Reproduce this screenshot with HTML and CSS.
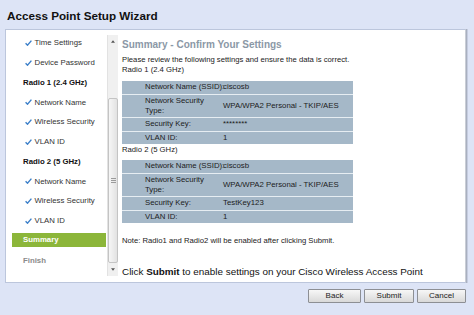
FILE: index.html
```html
<!DOCTYPE html>
<html>
<head>
<meta charset="utf-8">
<link rel="stylesheet" href="styles.css">
</head>
<body>
<div class="title">Access Point Setup Wizard</div>
<div class="panel">
  <div class="sidebar">
    <div class="item done"><svg class="chk" viewBox="0 0 7 6"><path d="M0.6 3.3 L2.5 5.2 L6.4 0.6" fill="none" stroke="#3b7fc9" stroke-width="1.4"/></svg>Time Settings</div>
    <div class="item done"><svg class="chk" viewBox="0 0 7 6"><path d="M0.6 3.3 L2.5 5.2 L6.4 0.6" fill="none" stroke="#3b7fc9" stroke-width="1.4"/></svg>Device Password</div>
    <div class="item group">Radio 1 (2.4 GHz)</div>
    <div class="item done"><svg class="chk" viewBox="0 0 7 6"><path d="M0.6 3.3 L2.5 5.2 L6.4 0.6" fill="none" stroke="#3b7fc9" stroke-width="1.4"/></svg>Network Name</div>
    <div class="item done"><svg class="chk" viewBox="0 0 7 6"><path d="M0.6 3.3 L2.5 5.2 L6.4 0.6" fill="none" stroke="#3b7fc9" stroke-width="1.4"/></svg>Wireless Security</div>
    <div class="item done"><svg class="chk" viewBox="0 0 7 6"><path d="M0.6 3.3 L2.5 5.2 L6.4 0.6" fill="none" stroke="#3b7fc9" stroke-width="1.4"/></svg>VLAN ID</div>
    <div class="item group">Radio 2 (5 GHz)</div>
    <div class="item done"><svg class="chk" viewBox="0 0 7 6"><path d="M0.6 3.3 L2.5 5.2 L6.4 0.6" fill="none" stroke="#3b7fc9" stroke-width="1.4"/></svg>Network Name</div>
    <div class="item done"><svg class="chk" viewBox="0 0 7 6"><path d="M0.6 3.3 L2.5 5.2 L6.4 0.6" fill="none" stroke="#3b7fc9" stroke-width="1.4"/></svg>Wireless Security</div>
    <div class="item done"><svg class="chk" viewBox="0 0 7 6"><path d="M0.6 3.3 L2.5 5.2 L6.4 0.6" fill="none" stroke="#3b7fc9" stroke-width="1.4"/></svg>VLAN ID</div>
    <div class="item current"><span class="bar">Summary</span></div>
    <div class="item todo">Finish</div>
  </div>
  <div class="scroll">
    <div class="arrow"><svg viewBox="0 0 5 3" class="tri"><path d="M0 3 L2.5 0 L5 3 Z" fill="#555"/></svg></div>
    <div class="thumb"><span class="grip"></span><span class="grip"></span><span class="grip"></span></div>
    <div class="arrow down"><svg viewBox="0 0 5 3" class="tri"><path d="M0 0 L2.5 3 L5 0 Z" fill="#555"/></svg></div>
  </div>
  <div class="content">
    <div class="heading">Summary - Confirm Your Settings</div>
    <div class="text intro">Please review the following settings and ensure the data is correct.</div>
    <div class="text">Radio 1 (2.4 GHz)</div>
    <table class="sum first">
      <tr><td class="lbl nw">Network Name (SSID):</td><td class="val">ciscosb</td></tr>
      <tr><td class="lbl">Network Security Type:</td><td class="val">WPA/WPA2 Personal - TKIP/AES</td></tr>
      <tr><td class="lbl">Security Key:</td><td class="val">********</td></tr>
      <tr><td class="lbl">VLAN ID:</td><td class="val">1</td></tr>
    </table>
    <div class="text r2">Radio 2 (5 GHz)</div>
    <table class="sum second">
      <tr><td class="lbl nw">Network Name (SSID):</td><td class="val">ciscosb</td></tr>
      <tr><td class="lbl">Network Security Type:</td><td class="val">WPA/WPA2 Personal - TKIP/AES</td></tr>
      <tr><td class="lbl">Security Key:</td><td class="val">TestKey123</td></tr>
      <tr><td class="lbl">VLAN ID:</td><td class="val">1</td></tr>
    </table>
    <div class="text note">Note: Radio1 and Radio2 will be enabled after clicking Submit.</div>
    <div class="submit-line">Click <b>Submit</b> to enable settings on your Cisco Wireless Access Point</div>
  </div>
</div>
<div class="buttons">
  <button class="btn back">Back</button>
  <button class="btn sub">Submit</button>
  <button class="btn cancel">Cancel</button>
</div>
</body>
</html>
```
FILE: styles.css
```css
html, body {
  margin: 0;
  padding: 0;
}
body {
  width: 474px;
  height: 315px;
  background: #dde4f6;
  font-family: "Liberation Sans", Arial, sans-serif;
  color: #222;
  overflow: hidden;
}
.title {
  box-sizing: border-box;
  height: 29px;
  padding: 9px 0 0 7px;
  font-size: 11.7px;
  line-height: 13px;
  font-weight: bold;
  color: #111;
}
.panel {
  box-sizing: border-box;
  margin-left: 5px;
  width: 461px;
  height: 254px;
  background: #fff;
  border: 1px solid #bcc6dc;
  border-right-color: #c9cdd6;
  box-shadow: 1px 0 0 #a9b0bf, 2px 0 0 #c6cde0;
  display: flex;
}
.sidebar {
  width: 101px;
  padding-top: 3px;
  flex: none;
}
.item {
  height: 19.75px;
  display: flex;
  align-items: center;
  font-size: 7.8px;
  color: #333;
  white-space: nowrap;
}
.item.done {
  padding-left: 19px;
}
.chk {
  width: 7px;
  height: 6px;
  margin-right: 2.5px;
  flex: none;
}
.item.group {
  padding-left: 17px;
  font-weight: bold;
  color: #111;
}
.item.current {
  padding-left: 6px;
}
.bar {
  box-sizing: border-box;
  width: 94px;
  height: 14px;
  line-height: 14px;
  padding-left: 11px;
  background: #8cb63a;
  color: #fff;
  font-weight: bold;
}
.item.todo {
  padding-left: 17px;
  color: #8a8a8a;
  font-weight: bold;
}
.scroll {
  box-sizing: border-box;
  width: 11px;
  flex: none;
  margin: 5px 0 6px 0;
  background: #f0f0f0;
  border-left: 1px solid #e2e2e2;
  display: flex;
  flex-direction: column;
  align-items: center;
}
.arrow {
  height: 13px;
  width: 100%;
  display: flex;
  align-items: center;
  justify-content: center;
  flex: none;
}
.arrow.down {
  margin-top: auto;
}
.tri {
  width: 4px;
  height: 3px;
}
.thumb {
  box-sizing: border-box;
  margin-top: 50px;
  width: 10px;
  height: 165px;
  border: 1px solid #c4c4c4;
  border-radius: 2px;
  background: linear-gradient(to right, #f6f6f6, #e2e2e2);
  display: flex;
  flex-direction: column;
  align-items: center;
  justify-content: center;
  gap: 1px;
}
.grip {
  display: block;
  width: 5px;
  height: 1px;
  background: #9a9a9a;
}
.content {
  padding-left: 4px;
  flex: 1;
}
.heading {
  margin-top: 9px;
  font-size: 10px;
  line-height: 12px;
  font-weight: bold;
  color: #8b98a6;
}
.text {
  font-size: 7.7px;
  line-height: 10px;
  color: #222;
  white-space: nowrap;
}
.intro {
  margin-top: 4px;
}
.sum {
  width: 231px;
  border-collapse: collapse;
  table-layout: fixed;
  background: #a5b8c8;
  font-size: 7.8px;
  color: #1c1c1c;
}
.sum.first {
  margin-top: 6px;
}
.sum.second {
  margin-top: 5px;
}
.sum tr + tr td {
  border-top: 1px solid #e6edf2;
}
.sum td {
  line-height: 10px;
  padding: 1px 0 1.5px 0;
  vertical-align: middle;
}
.lbl {
  width: 77px;
  padding-left: 23px !important;
}
.lbl.nw {
  white-space: nowrap;
}
.val {
  padding-left: 1px !important;
  white-space: nowrap;
}
.r2 {
  margin-top: 1px;
}
.note {
  margin-top: 13px;
}
.submit-line {
  margin-top: 20px;
  font-size: 9.9px;
  line-height: 12px;
  white-space: nowrap;
  color: #111;
}
.buttons {
  display: flex;
  justify-content: flex-end;
  gap: 3px;
  margin-top: 6px;
  padding-right: 8px;
}
.btn {
  box-sizing: border-box;
  height: 14px;
  padding: 0;
  font-family: "Liberation Sans", Arial, sans-serif;
  font-size: 8px;
  line-height: 12px;
  color: #222;
  background: linear-gradient(to bottom, #f7f7f7, #d9d9d9);
  border: 1px solid #8d8f94;
  border-radius: 1px;
}
.back { width: 53px; }
.sub { width: 50px; }
.cancel { width: 49px; }
```
